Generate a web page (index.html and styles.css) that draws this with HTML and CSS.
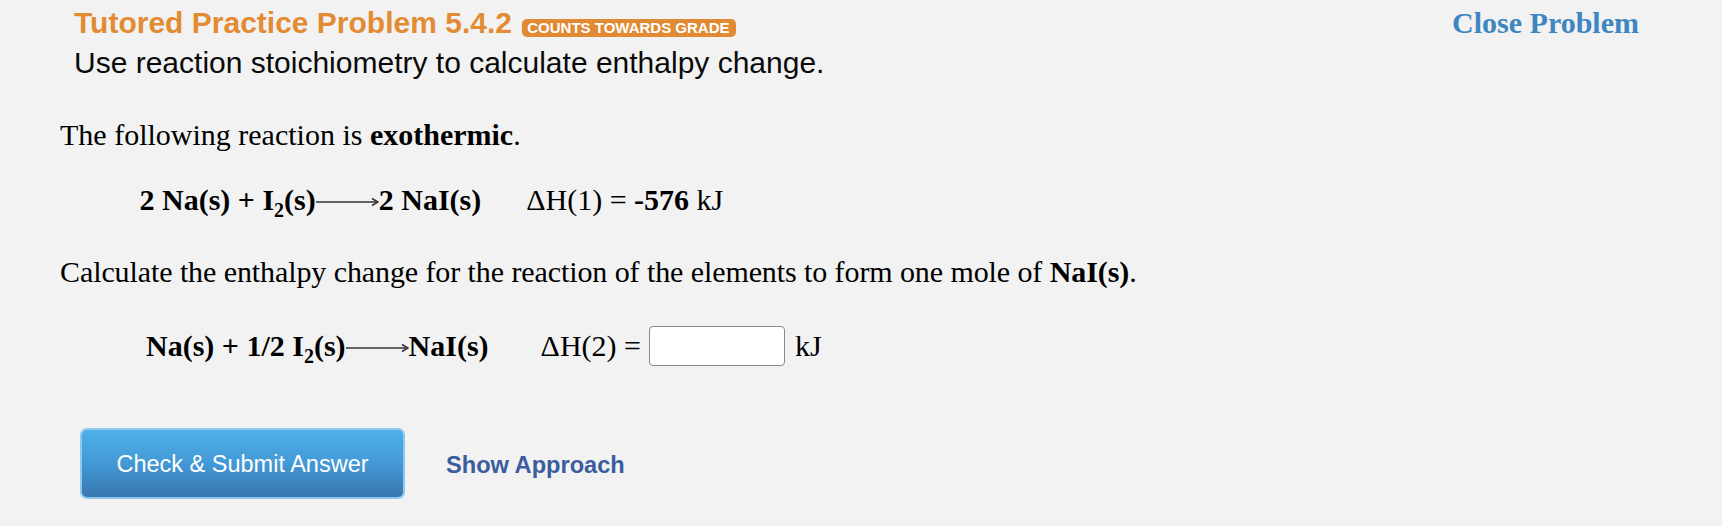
FILE: index.html
```html
<!DOCTYPE html>
<html lang="en">
<head>
<meta charset="utf-8">
<title>Tutored Practice Problem 5.4.2</title>
<link rel="stylesheet" href="styles.css">
</head>
<body>
<div class="page">
  <header class="header">
    <div class="heading">
      <h1 class="title">Tutored Practice Problem 5.4.2 <span class="badge">COUNTS TOWARDS GRADE</span></h1>
      <p class="subtitle">Use reaction stoichiometry to calculate enthalpy change.</p>
    </div>
    <a class="close" href="#">Close Problem</a>
  </header>

  <main class="content">
    <p class="text">The following reaction is <b>exothermic</b>.</p>

    <div class="eq eq1">
      <span class="rxn"><b>2 Na(s) + I<sub>2</sub>(s)</b><svg class="arrow" width="63" height="10" viewBox="0 0 63 10"><line x1="0" y1="5" x2="62" y2="5"/><path d="M56 1.5 L62 5 L56 8.5"/></svg><b>2 NaI(s)</b></span>
      <span class="dh">ΔH(1) = <b>-576</b> kJ</span>
    </div>

    <p class="text tight">Calculate the enthalpy change for the reaction of the elements to form one mole of <b>NaI(s)</b>.</p>

    <div class="eq eq2">
      <span class="rxn"><b>Na(s) + 1/2 I<sub>2</sub>(s)</b><svg class="arrow" width="63" height="10" viewBox="0 0 63 10"><line x1="0" y1="5" x2="62" y2="5"/><path d="M56 1.5 L62 5 L56 8.5"/></svg><b>NaI(s)</b></span>
      <span class="dh">ΔH(2) =</span>
      <input class="answer" type="text" aria-label="ΔH(2)">
      <span class="unit">kJ</span>
    </div>

    <div class="actions">
      <button class="submit" type="button">Check &amp; Submit Answer</button>
      <a class="approach" href="#">Show Approach</a>
    </div>
  </main>
</div>
</body>
</html>
```

FILE: styles.css
```css
html, body {
  margin: 0;
  padding: 0;
  background: #f2f2f2;
}

.page {
  width: 1722px;
  min-height: 526px;
}

.header {
  display: flex;
  justify-content: space-between;
  align-items: flex-start;
  padding: 5px 83px 0 74px;
}

.title {
  margin: 0;
  font-family: "Liberation Sans", Arial, sans-serif;
  font-weight: bold;
  font-size: 30px;
  line-height: 36px;
  color: #e28b33;
}

.badge {
  display: inline-block;
  margin-left: 2px;
  padding: 0 6px 0 5px;
  border-radius: 5px;
  background: #e08a33;
  color: #fff;
  font-size: 15px;
  line-height: 18px;
  font-weight: bold;
}

.subtitle {
  margin: 4px 0 0;
  font-family: "Liberation Sans", Arial, sans-serif;
  font-size: 30px;
  line-height: 36px;
  color: #0a0a0a;
}

.close {
  font-family: "Liberation Serif", "Times New Roman", serif;
  font-weight: bold;
  font-size: 30px;
  line-height: 36px;
  color: #3d86c0;
  text-decoration: none;
}

.content {
  padding: 36px 0 0 60px;
  font-family: "Liberation Serif", "Times New Roman", serif;
  font-size: 30px;
  line-height: 36px;
  color: #000;
}

.text {
  margin: 0;
}

.tight {
  letter-spacing: -0.09px;
}

.eq {
  display: flex;
  align-items: center;
}

.eq1 {
  margin: 29px 0 36px 79.5px;
}

.eq2 {
  margin: 36px 0 0 86px;
  height: 40px;
}

.eq1 .dh {
  margin-left: 45px;
}

.eq2 .dh {
  margin-left: 52px;
}

.rxn sub {
  font-size: 20px;
  line-height: 0;
  vertical-align: -7px;
}

.arrow {
  vertical-align: 3px;
}

.arrow line,
.arrow path {
  stroke: #333;
  stroke-width: 1.5;
  fill: none;
}

.answer {
  box-sizing: border-box;
  width: 136px;
  height: 40px;
  margin: 0 0 0 8px;
  padding: 0 6px;
  border: 1px solid #8a8a8a;
  border-radius: 4px;
  background: #fff;
  font-family: "Liberation Serif", serif;
  font-size: 24px;
}

.unit {
  margin-left: 10px;
}

.actions {
  display: flex;
  align-items: center;
  gap: 41px;
  margin: 62px 0 0 20px;
}

.submit {
  box-sizing: border-box;
  width: 325px;
  height: 71px;
  padding: 2px 0 0;
  border: 2px solid #8ec8ee;
  border-radius: 7px;
  background: linear-gradient(to bottom, #4eafe9 0%, #4399d6 50%, #3776af 100%);
  color: #fff;
  font-family: "Liberation Sans", Arial, sans-serif;
  font-size: 23.5px;
  cursor: pointer;
}

.approach {
  padding-top: 2px;
  font-family: "Liberation Sans", Arial, sans-serif;
  font-weight: bold;
  font-size: 23.6px;
  color: #3b5c9d;
  text-decoration: none;
}
```
